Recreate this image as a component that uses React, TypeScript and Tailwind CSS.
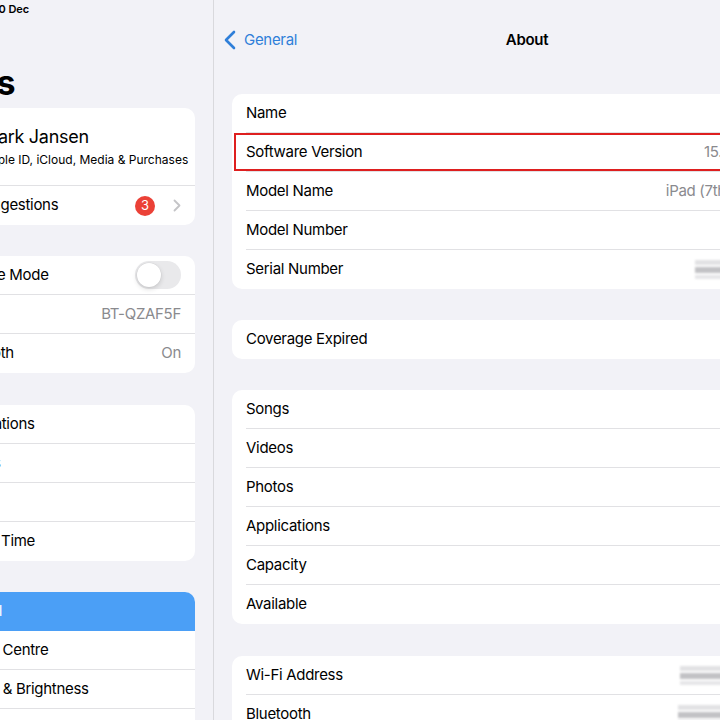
import React from "react";

type SideRow = {
  label: string;
  tile?: string;
  value?: string;
  toggle?: boolean;
  badge?: number;
  selected?: boolean;
};

type InfoRow = {
  label: string;
  value?: string;
  chevron?: boolean;
  blurred?: number;
  marked?: boolean;
};

const connectivity: SideRow[] = [
  { label: "Airplane Mode", tile: "bg-[#ff9500]", toggle: true },
  { label: "Wi-Fi", tile: "bg-[#007aff]", value: "BT-QZAF5F" },
  { label: "Bluetooth", tile: "bg-[#007aff]", value: "On" },
];

const notices: SideRow[] = [
  { label: "Notifications", tile: "bg-[#ff3b30]" },
  { label: "Sounds", tile: "bg-[#ff2d55]" },
  { label: "Focus", tile: "bg-[#5856d6]" },
  { label: "Screen Time", tile: "bg-[#5856d6]" },
];

const system: SideRow[] = [
  { label: "General", tile: "bg-[#8e8e93]", selected: true },
  { label: "Control Centre", tile: "bg-[#8e8e93]" },
  { label: "Display & Brightness", tile: "bg-[#007aff]" },
  { label: "Home Screen & Dock", tile: "bg-[#007aff]" },
  { label: "Accessibility", tile: "bg-[#007aff]" },
];

const device: InfoRow[] = [
  { label: "Name", value: "iPad", chevron: true },
  { label: "Software Version", value: "15.7.9 (19H365)", marked: true },
  { label: "Model Name", value: "iPad (7th generation)" },
  { label: "Model Number", value: "MW742B/A" },
  { label: "Serial Number", blurred: 113 },
];

const coverage: InfoRow[] = [{ label: "Coverage Expired", chevron: true }];

const media: InfoRow[] = [
  { label: "Songs", value: "0" },
  { label: "Videos", value: "3" },
  { label: "Photos", value: "1,248" },
  { label: "Applications", value: "42" },
  { label: "Capacity", value: "32 GB" },
  { label: "Available", value: "8.61 GB" },
];

const network: InfoRow[] = [
  { label: "Wi-Fi Address", blurred: 128 },
  { label: "Bluetooth", blurred: 130 },
];

const Chevron = ({ className }: { className?: string }) => (
  <svg viewBox="0 0 8 13" className={className} fill="none">
    <path d="M1.5 1.5 6.5 6.5 1.5 11.5" stroke="currentColor" strokeWidth="1.8" strokeLinecap="round" strokeLinejoin="round" />
  </svg>
);

const Toggle = () => (
  <div className="h-[28px] w-[46px] rounded-full bg-[#e9e9eb] p-[2px]">
    <div className="h-[24px] w-[24px] rounded-full bg-white shadow-[0_2px_5px_rgba(0,0,0,0.15),0_0_0_0.5px_rgba(0,0,0,0.05)]" />
  </div>
);

// pixelated value that was masked in the capture
const Masked = ({ width }: { width: number }) => (
  <div className="flex flex-col gap-[2px] blur-[1.2px]" style={{ width }}>
    <div className="h-[5px] w-full bg-[#e2e2e4]" />
    <div className="h-[6px] w-full bg-[#c2c2c5]" />
    <div className="h-[4px] w-full bg-[#e6e6e8]" />
  </div>
);

const SidebarGroup = ({ rows }: { rows: SideRow[] }) => (
  <div className="overflow-hidden rounded-[10px] bg-white">
    {rows.map((row, i) => (
      <div key={row.label} className={`flex h-[39px] items-center pl-[16px] ${row.selected ? "bg-[#4b9ff6]" : ""}`}>
        <div className={`h-[29px] w-[29px] shrink-0 rounded-[7px] ${row.tile}`} />
        <div
          className={`ml-[8px] flex h-full flex-1 items-center justify-between pr-[14px] ${
            i < rows.length - 1 && !row.selected ? "border-b border-[#e1e1e4]" : ""
          }`}
        >
          <span className={`whitespace-nowrap text-[15px] tracking-[-0.3px] ${row.selected ? "text-white" : "text-black"}`}>
            {row.label}
          </span>
          {row.toggle && <Toggle />}
          {row.value && <span className="text-[15px] tracking-[-0.3px] text-[#8a8a8e]">{row.value}</span>}
        </div>
      </div>
    ))}
  </div>
);

const InfoGroup = ({ rows }: { rows: InfoRow[] }) => (
  <div className="mx-[18px] overflow-hidden rounded-[10px] bg-white">
    {rows.map((row, i) => (
      <div key={row.label} className="relative h-[39px] pl-[14px]">
        <div
          className={`flex h-full items-center justify-between pr-[14px] ${
            i < rows.length - 1 ? "border-b border-[#e1e1e4]" : ""
          }`}
        >
          <span className="whitespace-nowrap text-[15px] tracking-[-0.3px] text-black">{row.label}</span>
          <div className="flex items-center gap-[8px]">
            {row.value && (
              <span className="whitespace-nowrap text-[15px] tracking-[-0.3px] text-[#8a8a8e]">{row.value}</span>
            )}
            {row.blurred && <Masked width={row.blurred} />}
            {row.chevron && <Chevron className="h-[13px] w-[8px] text-[#c4c4c7]" />}
          </div>
        </div>
        {row.marked && (
          <div className="pointer-events-none absolute bottom-[1px] left-[2px] right-[2px] top-0 border-2 border-[#de1f1f]" />
        )}
      </div>
    ))}
  </div>
);

const Sidebar = () => (
  <div className="h-full w-[214px] shrink-0 overflow-hidden border-r border-[#d9d9dd]">
    <div className="-ml-[104px] w-[299px]">
      <div className="flex h-[18px] w-[133px] items-center justify-end">
        <span className="whitespace-nowrap text-[11px] font-semibold tracking-[-0.1px]">09:41&nbsp;&nbsp;Sat 10 Dec</span>
      </div>
      <div className="flex h-[90px] w-[119px] items-end justify-end pb-[5px]">
        <span className="whitespace-nowrap text-[34px] font-bold leading-[41px] tracking-[-0.6px]">Settings</span>
      </div>

      <div className="overflow-hidden rounded-[10px] bg-white">
        <div className="flex h-[78px] items-center pl-[16px]">
          <div className="h-[60px] w-[60px] shrink-0 rounded-full bg-[#c7c7cc]" />
          <div className="ml-[10px] flex h-full flex-1 flex-col justify-center border-b border-[#e1e1e4] pb-[1px]">
            <span className="whitespace-nowrap text-[18px] leading-[22px] tracking-[-0.3px]">Mark Jansen</span>
            <span className="mt-[4px] whitespace-nowrap text-[12px] leading-[15px]">
              Apple ID, iCloud, Media &amp; Purchases
            </span>
          </div>
        </div>
        <div className="flex h-[39px] items-center justify-between pl-[16px] pr-[14px]">
          <span className="whitespace-nowrap text-[15px] tracking-[-0.3px]">Apple ID Suggestions</span>
          <div className="flex items-center">
            <div className="flex h-[20px] w-[20px] items-center justify-center rounded-full bg-[#eb4137] text-[13px] text-white">
              3
            </div>
            <Chevron className="ml-[18px] h-[13px] w-[8px] text-[#c4c4c7]" />
          </div>
        </div>
      </div>

      <div className="mt-[31px]">
        <SidebarGroup rows={connectivity} />
      </div>
      <div className="mt-[32px]">
        <SidebarGroup rows={notices} />
      </div>
      <div className="mt-[31px]">
        <SidebarGroup rows={system} />
      </div>
    </div>
  </div>
);

const AboutPane = () => (
  <div className="w-[626px] shrink-0">
    <div className="h-[18px]" />
    <div className="grid h-[44px] grid-cols-[1fr_auto_1fr] items-center">
      <div className="flex items-center pl-[10px] text-[#2f7fd9]">
        <svg viewBox="0 0 12 20" className="h-[20px] w-[12px]" fill="none">
          <path d="M10 2 2 10 10 18" stroke="currentColor" strokeWidth="2.6" strokeLinecap="round" strokeLinejoin="round" />
        </svg>
        <span className="ml-[8px] text-[15px] tracking-[-0.3px]">General</span>
      </div>
      <span className="text-[15px] font-semibold tracking-[-0.3px]">About</span>
      <div />
    </div>

    <div className="mt-[32px]">
      <InfoGroup rows={device} />
    </div>
    <div className="mt-[31px]">
      <InfoGroup rows={coverage} />
    </div>
    <div className="mt-[31px]">
      <InfoGroup rows={media} />
    </div>
    <div className="mt-[32px]">
      <InfoGroup rows={network} />
    </div>
  </div>
);

export default function App() {
  return (
    <div className="flex h-[720px] w-[720px] overflow-hidden bg-[#f2f2f7] font-['Inter',sans-serif] text-black">
      <Sidebar />
      <AboutPane />
    </div>
  );
}
